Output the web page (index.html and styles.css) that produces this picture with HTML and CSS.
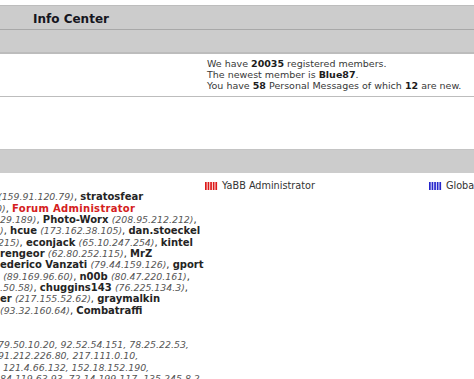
FILE: index.html
```html
<!DOCTYPE html>
<html>
<head>
<meta charset="utf-8">
<link rel="stylesheet" href="styles.css">
</head>
<body>
<div class="page">
  <div class="bar title-bar"><span class="title">Info Center</span></div>
  <div class="bar sub-bar"></div>
  <div class="stats-row">
    <div class="stats-left"></div>
    <div class="stats">
      <div>We have <b>20035</b> registered members.</div>
      <div>The newest member is <b>Blue87</b>.</div>
      <div>You have <b>58</b> Personal Messages of which <b>12</b> are new.</div>
    </div>
  </div>
  <div class="gap"></div>
  <div class="bar sub-bar2"></div>
  <div class="online">
    <div class="legend">
      <span class="legend-item admin">
        <svg width="13" height="8" viewBox="0 0 13 8"><rect x="0" y="0" width="1.7" height="8"/><rect x="2.6" y="0" width="1.7" height="8"/><rect x="5.2" y="0" width="1.7" height="8"/><rect x="7.8" y="0" width="1.7" height="8"/><rect x="10.4" y="0" width="1.7" height="8"/></svg>
        YaBB Administrator
      </span>
      <span class="legend-item global">
        <svg width="13" height="8" viewBox="0 0 13 8"><rect x="0" y="0" width="1.7" height="8"/><rect x="2.6" y="0" width="1.7" height="8"/><rect x="5.2" y="0" width="1.7" height="8"/><rect x="7.8" y="0" width="1.7" height="8"/><rect x="10.4" y="0" width="1.7" height="8"/></svg>
        Global Moderator
      </span>
    </div>
    <div class="users">
      <div class="ln s1"><i>(159.91.120.79)</i>, <b>stratosfear</b></div>
      <div class="ln s2"><i>0)</i>, <b class="red">Forum Administrator</b></div>
      <div class="ln s0"><i>29.189)</i>, <b>Photo-Worx</b> <i>(208.95.212.212)</i>,</div>
      <div class="ln s0"><i>)</i>, <b>hcue</b> <i>(173.162.38.105)</i>, <b>dan.stoeckel</b></div>
      <div class="ln s1"><i>215)</i>, <b>econjack</b> <i>(65.10.247.254)</i>, <b>kintel</b></div>
      <div class="ln s0"><b>rengeor</b> <i>(62.80.252.115)</i>, <b>MrZ</b></div>
      <div class="ln s0"><b>ederico Vanzati</b> <i>(79.44.159.126)</i>, <b>gport</b></div>
      <div class="ln s0">&nbsp;<i>(89.169.96.60)</i>, <b>n00b</b> <i>(80.47.220.161)</i>,</div>
      <div class="ln s0"><i>.50.58)</i>, <b>chuggins143</b> <i>(76.225.134.3)</i>,</div>
      <div class="ln s0"><b>er</b> <i>(217.155.52.62)</i>, <b>graymalkin</b></div>
      <div class="ln s0"><i>(93.32.160.64)</i>, <b>Combatraffi</b></div>
      <div class="ln blank">&nbsp;</div>
      <div class="ln blank">&nbsp;</div>
      <div class="ln s1"><i>79.50.10.20, 92.52.54.151, 78.25.22.53,</i></div>
      <div class="ln s1"><i>91.212.226.80, 217.111.0.10,</i></div>
      <div class="ln s0"><i>&nbsp;121.4.66.132, 152.18.152.190,</i></div>
      <div class="ln s0"><i>84.119.63.93, 72.14.199.117, 135.245.8.2</i></div>
    </div>
  </div>
</div>
</body>
</html>
```

FILE: styles.css
```css
html, body {
  margin: 0;
  padding: 0;
  background: #ffffff;
}

.page {
  width: 474px;
  height: 379px;
  overflow: hidden;
  padding-top: 5px;
  box-sizing: border-box;
  font-family: "DejaVu Sans", Verdana, sans-serif;
  font-size: 10px;
  color: #2a2a2a;
}

.bar {
  background: #cccccc;
}

.title-bar {
  height: 23px;
  border-top: 1px solid #bdbdbd;
  border-bottom: 1px solid #a8a8a8;
  display: flex;
  align-items: center;
  padding-left: 33px;
}

.title {
  font-weight: bold;
  font-size: 12px;
  color: #151520;
  position: relative;
  top: 1px;
}

.sub-bar {
  height: 22px;
  border-bottom: 2px solid #bcbcbc;
}

.stats-row {
  display: flex;
  height: 42px;
  border-bottom: 1px solid #bdbdbd;
}

.stats-left {
  width: 207px;
  flex: none;
}

.stats {
  padding-top: 4px;
  font-size: 9.5px;
  line-height: 11px;
  color: #383838;
  white-space: nowrap;
}

.stats b {
  color: #1c1c1c;
}

.gap {
  height: 52px;
}

.sub-bar2 {
  height: 23px;
  border-top: 1px solid #c4c4c4;
}

.online {
  padding-top: 7px;
  line-height: 11.35px;
}

.legend {
  display: flex;
  white-space: nowrap;
  color: #333333;
  font-size: 9.7px;
  height: 11.35px;
}

.legend-item {
  display: inline-flex;
  align-items: center;
  gap: 4px;
}

.admin {
  margin-left: 205px;
}

.admin svg {
  fill: #dd1a1a;
}

.global {
  margin-left: 114px;
}

.global svg {
  fill: #2626cc;
}

.users {
  white-space: nowrap;
}

.ln {
  color: #2a2a2a;
  height: 11.35px;
}

.ln.s1 {
  margin-left: -2px;
}

.ln.s2 {
  margin-left: -4px;
}

.ln b {
  color: #242424;
  font-size: 10px;
}

.ln i {
  color: #555555;
  font-size: 9.4px;
}

.ln b.red {
  color: #d42020;
  letter-spacing: 0.3px;
}
```
